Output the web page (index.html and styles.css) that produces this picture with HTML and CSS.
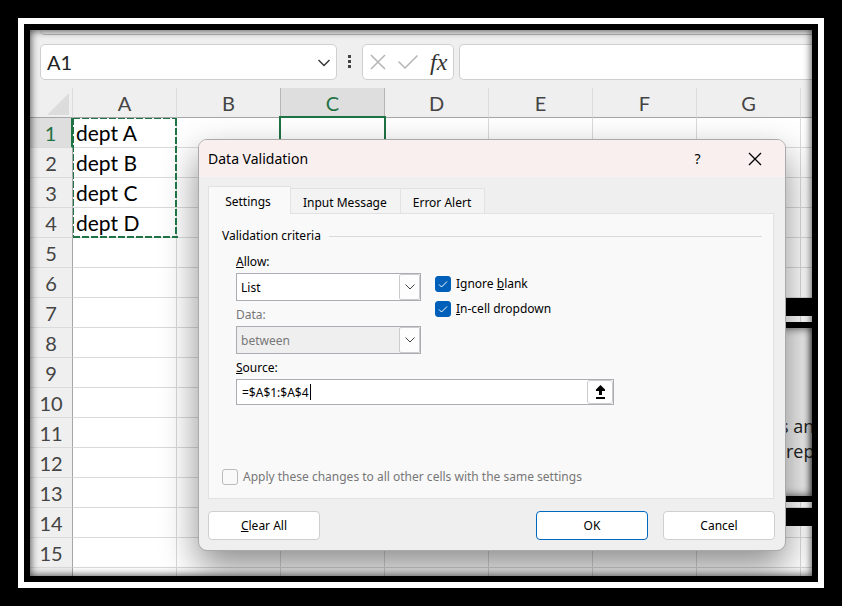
FILE: index.html
```html
<!DOCTYPE html>
<html lang="en">
<head>
<meta charset="utf-8">
<title>Data Validation</title>
<link rel="stylesheet" href="styles.css">
</head>
<body>
<main class="frame">
  <div class="screen">
    <div class="ribbon-edge"></div>
    <div class="formula-bar">
      <div class="name-box">
        <input class="name-input" type="text" value="A1" aria-label="Name box">
        <svg width="14" height="14" viewBox="0 0 14 14" fill="none" stroke="#333" stroke-width="1.4"><path d="M1.500 5 7 10.500 12.500 5"/></svg>
      </div>
      <svg class="grip" width="4" height="14" viewBox="0 0 4 14" fill="#444"><path d="M0 0h3v3H0zM0 5h3v3H0zM0 10h3v3H0z"/></svg>
      <div class="fx-box">
        <svg width="16" height="16" viewBox="0 0 16 16" fill="none" stroke="#b5b5b5" stroke-width="1.500"><path d="M1 1l14 14M15 1 1 15"/></svg>
        <svg width="20" height="16" viewBox="0 0 20 16" fill="none" stroke="#b5b5b5" stroke-width="1.500"><path d="M.5 7.500 7 14 19.500 1.500"/></svg>
        <span class="fx">fx</span>
      </div>
      <input class="formula-input" type="text" aria-label="Formula">
    </div>
    <div class="sheet">
      <table class="grid">
        <colgroup><col class="num-col"><col class="col"><col class="col"><col class="col"><col class="col"><col class="col"><col class="col"><col class="col"><col class="col"></colgroup>
        <thead>
          <tr><th class="corner"><svg width="22" height="22" viewBox="0 0 22 22"><path d="M22 0v22H0z" fill="#dcdcdc"/></svg></th><th>A</th><th>B</th><th class="picked">C</th><th>D</th><th>E</th><th>F</th><th>G</th><th></th></tr>
        </thead>
        <tbody>
          <tr><th class="picked-row">1</th><td class="ants-host">dept A<svg class="ants" width="105" height="121" viewBox="0 0 105 121" fill="none" stroke="#1f7244"><path stroke-dasharray="7 2" d="M0 .5h104M.5 0v120"/><path stroke-width="2" stroke-dasharray="7 2" d="M103 1v119M0 119h105"/></svg></td><td></td><td class="active"></td><td></td><td></td><td></td><td></td><td></td></tr>
          <tr><th>2</th><td>dept B</td><td></td><td></td><td></td><td></td><td></td><td></td><td></td></tr>
          <tr><th>3</th><td>dept C</td><td></td><td></td><td></td><td></td><td></td><td></td><td></td></tr>
          <tr><th>4</th><td>dept D</td><td></td><td></td><td></td><td></td><td></td><td></td><td></td></tr>
          <tr><th>5</th><td></td><td></td><td></td><td></td><td></td><td></td><td></td><td></td></tr>
          <tr><th>6</th><td></td><td></td><td></td><td></td><td></td><td></td><td></td><td></td></tr>
          <tr><th>7</th><td></td><td></td><td></td><td></td><td></td><td></td><td></td><td></td></tr>
          <tr><th>8</th><td></td><td></td><td></td><td></td><td></td><td></td><td></td><td></td></tr>
          <tr><th>9</th><td></td><td></td><td></td><td></td><td></td><td></td><td></td><td></td></tr>
          <tr><th>10</th><td></td><td></td><td></td><td></td><td></td><td></td><td></td><td></td></tr>
          <tr><th>11</th><td></td><td></td><td></td><td></td><td></td><td></td><td></td><td></td></tr>
          <tr><th>12</th><td></td><td></td><td></td><td></td><td></td><td></td><td></td><td></td></tr>
          <tr><th>13</th><td></td><td></td><td></td><td></td><td></td><td></td><td></td><td></td></tr>
          <tr><th>14</th><td></td><td></td><td></td><td></td><td></td><td></td><td></td><td></td></tr>
          <tr><th>15</th><td></td><td></td><td></td><td></td><td></td><td></td><td></td><td></td></tr>
          <tr><th></th><td></td><td></td><td></td><td></td><td></td><td></td><td></td><td></td></tr>
        </tbody>
      </table>
    </div>

    <div class="picture">
      <div class="picture-body">
        <p>s an</p>
        <p>rep</p>
      </div>
    </div>

    <section class="dialog" role="dialog" aria-labelledby="dialog-title">
      <header class="title-bar">
        <h1 id="dialog-title">Data Validation</h1>
        <button class="title-button" type="button">?</button>
        <button class="title-button" type="button" aria-label="Close"><svg width="14" height="14" viewBox="0 0 14 14" fill="none" stroke="#000" stroke-width="1.300"><path d="M1 1l12 12M13 1 1 13"/></svg></button>
      </header>
      <div class="dialog-content">
        <div class="tabs" role="tablist">
          <button class="tab tab-current" type="button" role="tab" aria-selected="true">Settings</button>
          <button class="tab" type="button" role="tab">Input Message</button>
          <button class="tab" type="button" role="tab">Error Alert</button>
        </div>
        <div class="panel">
          <div class="group-title"><span>Validation criteria</span></div>
          <div class="criteria">
            <div class="fields">
              <label for="allow"><u>A</u>llow:</label>
              <div class="drop">
                <select id="allow"><option>List</option></select>
                <span class="drop-arrow"><svg width="10" height="6" viewBox="0 0 10 6" fill="none" stroke="#444"><path d="M.5.5 5 5 9.500.5"/></svg></span>
              </div>
              <label class="dim" for="data">Data:</label>
              <div class="drop drop-off">
                <select id="data" disabled><option>between</option></select>
                <span class="drop-arrow"><svg width="10" height="6" viewBox="0 0 10 6" fill="none" stroke="#444"><path d="M.5.5 5 5 9.500.5"/></svg></span>
              </div>
            </div>
            <div class="checks">
              <label class="check"><input type="checkbox" checked><span>Ignore <u>b</u>lank</span></label>
              <label class="check"><input type="checkbox" checked><span><u>I</u>n-cell dropdown</span></label>
            </div>
          </div>
          <div class="source-field">
            <label for="source"><u>S</u>ource:</label>
            <div class="source">
              <input id="source" type="text" value="=$A$1:$A$4">
              <span class="caret"></span>
              <button type="button" aria-label="Collapse dialog"><svg width="11" height="14" viewBox="0 0 11 14"><path d="M5.500 0 10 4.500V6H7v4H4V6H1V4.500zM1 12h9v2H1z"/></svg></button>
            </div>
          </div>
          <label class="check apply dim"><input type="checkbox" disabled><span>Apply these changes to all other cells with the same settings</span></label>
        </div>
        <footer class="actions">
          <button class="action clear" type="button"><u>C</u>lear All</button>
          <button class="action primary" type="button">OK</button>
          <button class="action" type="button">Cancel</button>
        </footer>
      </div>
    </section>
  </div>
</main>
</body>
</html>
```
FILE: styles.css
```css
* { box-sizing: border-box; }

body {
  margin: 0;
  height: 100vh;
  padding: 18px;
  background: #000;
  color: #000;
  font-family: "Noto Sans", "Open Sans", sans-serif;
  font-size: 12px;
  overflow: hidden;
}

button, input, select {
  font: inherit;
  color: inherit;
  margin: 0;
  padding: 0;
}

.frame {
  height: 100%;
  border: 6px solid #fff;
  padding: 6px;
}

.screen {
  position: relative;
  height: 100%;
  overflow: hidden;
  background: #efefef;
}

/* vignette over the whole window */
.screen::after {
  content: "";
  position: absolute;
  inset: 0;
  box-shadow: inset 0 0 8px rgba(0, 0, 0, 0.8);
  pointer-events: none;
}

/* formula bar */
.ribbon-edge {
  height: 5px;
  margin-left: 10px;
  border-bottom: 1px solid #b8b8b8;
  border-bottom-left-radius: 6px;
}

.formula-bar {
  display: flex;
  align-items: center;
  height: 36px;
  margin: 9px 0 8px 10px;
}

.name-box, .fx-box, .formula-input {
  height: 36px;
  border: 1px solid #cfcfcf;
  border-radius: 5px;
  background: #fff;
}

.name-box {
  display: flex;
  align-items: center;
  width: 297px;
  padding: 0 5px 0 6px;
}

.name-input {
  flex: 1;
  min-width: 0;
  border: 0;
  outline: 0;
  font-family: Lato, sans-serif;
  font-size: 20px;
  color: #222;
}

.grip { margin: 0 10px 0 11px; }

.fx-box {
  display: flex;
  align-items: center;
  gap: 12px;
  width: 92px;
  padding: 0 0 0 7px;
}

.fx {
  font-family: "Liberation Serif", serif;
  font-style: italic;
  font-size: 24px;
  line-height: 28px;
  color: #333;
}

.formula-input {
  flex: 1;
  min-width: 0;
  margin-left: 5px;
  border-right: 0;
  border-radius: 5px 0 0 5px;
}

/* sheet */
.grid {
  width: 875px;
  table-layout: fixed;
  border-collapse: separate;
  border-spacing: 0;
  font-family: Lato, sans-serif;
  font-size: 21px;
  background: #fff;
}

.num-col { width: 43px; }
.col { width: 104px; }

.grid th, .grid td {
  height: 30px;
  padding: 0;
  line-height: 29px;
  border-right: 1px solid #dadada;
  border-bottom: 1px solid #dadada;
}

.grid th {
  padding-top: 1px;
  line-height: 28px;
  font-size: 20px;
  font-weight: 400;
  color: #444;
  background: #efefef;
}

.grid thead th {
  border-bottom-color: #a6a6a6;
  border-right-color: #dcdcdc;
}

.grid tbody th { border-right-color: #a6a6a6; }

.grid td { padding-left: 3px; }

.grid .corner { text-align: right; }
.corner svg { display: block; margin: 2px 3px 0 auto; }

.grid .picked {
  color: #1f7244;
  background: #dedede;
  border-right-color: #b5b5b5;
  box-shadow: -1px 0 #b5b5b5;
}

.grid .picked-row {
  color: #1f7244;
  background: #dedede;
  border-right: 2px solid #1f7244;
}

.active { position: relative; }

.active::after {
  content: "";
  position: absolute;
  inset: -2px;
  border: 2px solid #1f7244;
}

.ants-host { position: relative; }
.ants { position: absolute; left: 0; top: 0; z-index: 1; }

/* framed picture partly behind the dialog */
.picture {
  position: absolute;
  left: 600px;
  right: 0;
  top: 268px;
  border: solid #000;
  border-width: 18px 0;
  padding: 6px 0;
}

.picture-body {
  height: 180px;
  border: solid #000;
  border-width: 6px 0;
  background: #efefef;
  box-shadow: inset 0 0 8px rgba(0, 0, 0, 0.7);
  padding: 86px 0 0 150px;
  font-family: "Open Sans", sans-serif;
  font-size: 18px;
  line-height: 25px;
  white-space: nowrap;
  color: #222;
}

.picture-body p { margin: 0; }
.picture-body p + p { padding-left: 6px; }

/* dialog */
.dialog {
  position: absolute;
  left: 168px;
  top: 109px;
  width: 588px;
  border: 1px solid #a9a9a9;
  border-radius: 9px;
  background: #efefef;
  overflow: hidden;
  box-shadow: 0 16px 36px rgba(0, 0, 0, 0.45);
}

.title-bar {
  display: flex;
  align-items: center;
  height: 37px;
  padding: 0 2px 0 9px;
  background: #f9efef;
}

.title-bar h1 {
  flex: 1;
  margin: 0;
  font-size: 14px;
  font-weight: 400;
}

.title-button {
  display: flex;
  align-items: center;
  justify-content: center;
  width: 57px;
  height: 37px;
  border: 0;
  background: none;
  font-size: 14px;
}

.dialog-content { padding: 9px 11px 10px 9px; }

.tabs {
  display: flex;
  align-items: flex-end;
}

.tab {
  height: 25px;
  padding: 2px 13px 0 12px;
  border: 1px solid #e2e2e2;
  border-width: 1px 1px 0 0;
  background: #f3f3f3;
}

.tab-current {
  position: relative;
  height: 28px;
  width: 83px;
  padding-right: 15px;
  border-left-width: 1px;
  margin-bottom: -1px;
  background: #f9f9f9;
}

.panel {
  display: flex;
  flex-direction: column;
  height: 286px;
  padding: 13px 11px 12px 13px;
  border: 1px solid #e2e2e2;
  background: #f9f9f9;
}

.group-title {
  display: flex;
  align-items: center;
  gap: 8px;
  line-height: 18px;
}

.group-title::after {
  content: "";
  flex: 1;
  border-top: 1px solid #dadada;
}

.criteria {
  display: flex;
  gap: 14px;
  margin: 8px 0 0 14px;
}

.fields { width: 185px; }

.fields label, .source-field label {
  display: block;
  height: 20px;
  line-height: 18px;
}

.dim { color: #777; }

.drop {
  display: flex;
  position: relative;
  height: 28px;
  margin-bottom: 5px;
  border: 1px solid #abadb3;
  background: #fff;
}

.drop select {
  flex: 1;
  appearance: none;
  border: 0;
  background: none;
  padding-left: 4px;
  opacity: 1;
}

.drop-off { background: #efefef; color: #777; }

.drop-arrow {
  position: absolute;
  top: 0;
  right: 0;
  display: flex;
  align-items: center;
  justify-content: center;
  width: 21px;
  height: 26px;
  border: 1px solid #ccc;
  border-radius: 2px;
  background: #fdfdfd;
  pointer-events: none;
}

.checks {
  display: flex;
  flex-direction: column;
  gap: 7px;
  padding-top: 22px;
}

.check {
  display: flex;
  align-items: center;
  gap: 5px;
  line-height: 18px;
}

.check input {
  appearance: none;
  width: 16px;
  height: 16px;
  border: 1px solid #bbb;
  border-radius: 3px;
  background: #f9f9f9;
}

.check input:checked {
  border-color: #005fb8;
  background: #005fb8 url("data:image/svg+xml,%3Csvg xmlns='http://www.w3.org/2000/svg' viewBox='0 0 14 14' fill='none' stroke='white'%3E%3Cpath d='M3 7.500l2.500 2.500L11 4.500'/%3E%3C/svg%3E") center / 14px 14px;
}

.source-field {
  width: 378px;
  margin-left: 14px;
}

.source {
  position: relative;
  display: flex;
  height: 26px;
  border: 1px solid #abadb3;
  background: #fff;
}

.source input {
  flex: 1;
  min-width: 0;
  border: 0;
  outline: 0;
  padding-left: 5px;
  background: none;
}

.caret {
  position: absolute;
  left: 73px;
  top: 4px;
  width: 1px;
  height: 16px;
  background: #000;
}

.source button {
  display: flex;
  align-items: center;
  justify-content: center;
  width: 26px;
  border: 1px solid #ccc;
  border-radius: 3px;
  background: #fff;
}

.apply { margin-top: auto; }

.actions {
  display: flex;
  gap: 15px;
  margin: 12px -1px 0 0;
}

.action {
  width: 112px;
  height: 29px;
  border: 1px solid #cfcfcf;
  border-radius: 4px;
  background: #fff;
}

.clear { margin-right: auto; }
.primary { border-color: #0067c0; }
```
